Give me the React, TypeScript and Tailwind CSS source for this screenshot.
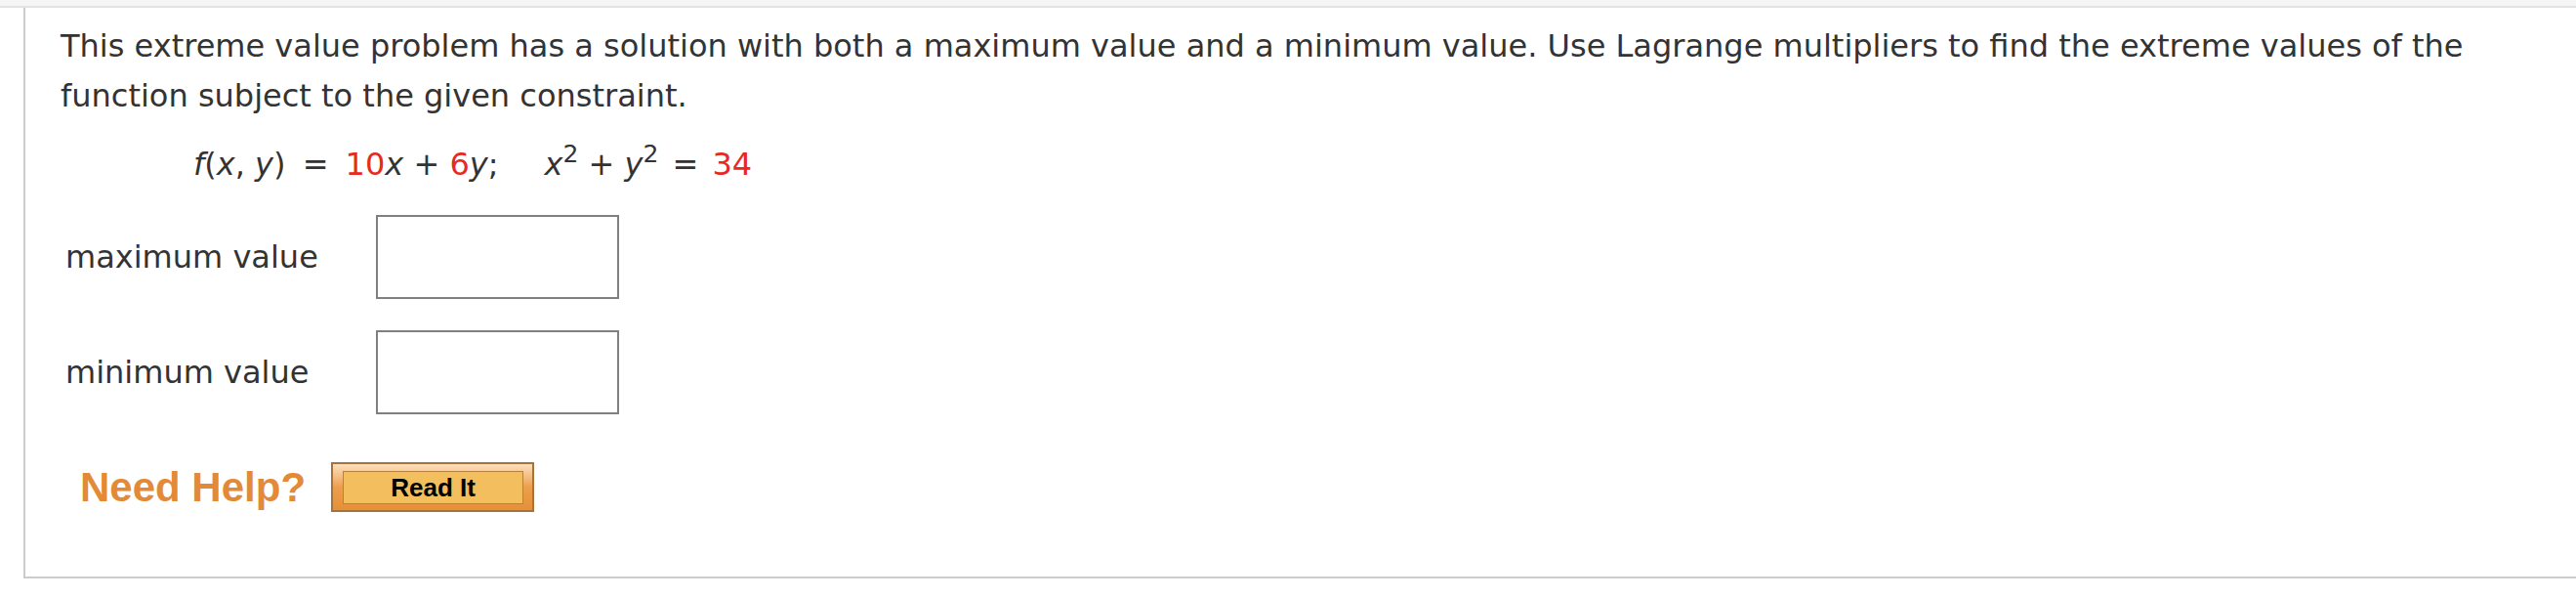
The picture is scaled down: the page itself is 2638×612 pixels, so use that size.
import React from 'react';

const Red = ({ children }: { children: React.ReactNode }) => (
    <span className="text-[#e62a1f]">{children}</span>
);

const AnswerRow = ({ label }: { label: string }) => (
    <div className="flex items-center">
        <span className="w-[318px]">{label}</span>
        <div className="w-[249px] h-[86px] border-2 border-[#808080] bg-white" />
    </div>
);

export default function App() {
    return (
        <div className="w-[2638px] h-[612px] bg-white text-[#333333] font-['DejaVu_Sans',Verdana,sans-serif]">
            <div className="h-[6px] bg-[#f5f5f5]" />
            <div className="h-[2px] bg-[#e2e2e2]" />
            <div className="ml-[24px] h-[584px] border-l-2 border-b-2 border-[#cccccc] pl-[36px] pr-[40px] pt-[14px] text-[32px] leading-[51px]">
                <p>
                    This extreme value problem has a solution with both a maximum value and a minimum value. Use Lagrange multipliers to find the extreme values of the function subject to the given constraint.
                </p>

                <div className="mt-[19px] pl-[136px] whitespace-pre">
                    <i>f</i>(<i>x</i>, <i>y</i>) <span className="mx-[7px]">=</span> <Red>10</Red><i>x</i> + <Red>6</Red><i>y</i>;
                    <span className="ml-[47px]">
                        <i>x</i><sup className="text-[25px] -top-[13px]">2</sup> + <i>y</i>
                        <sup className="text-[25px] -top-[13px]">2</sup> <span className="mx-[4px]">=</span> <Red>34</Red>
                    </span>
                </div>

                <div className="mt-[26px] flex flex-col gap-[32px] pl-[5px]">
                    <AnswerRow label="maximum value" />
                    <AnswerRow label="minimum value" />
                </div>

                <div className="mt-[49px] flex items-center gap-[26px] pl-[20px]">
                    <span className="font-['Liberation_Sans',Arial,sans-serif] font-bold text-[42px] leading-none text-[#e38a39]">
                        Need Help?
                    </span>
                    <button className="w-[208px] h-[51px] border-2 border-[#a8733a] bg-gradient-to-b from-[#fbe0bd] via-[#ec9f4b] to-[#e58f3a] pl-[10px] pr-[9px] pt-[7px] pb-[6px]">
                        <div className="h-full border border-[#b5833f] bg-[#f3be5d] flex items-center justify-center font-['Liberation_Sans',Arial,sans-serif] font-bold text-[26px] text-black leading-none">
                            Read It
                        </div>
                    </button>
                </div>
            </div>
        </div>
    );
}
